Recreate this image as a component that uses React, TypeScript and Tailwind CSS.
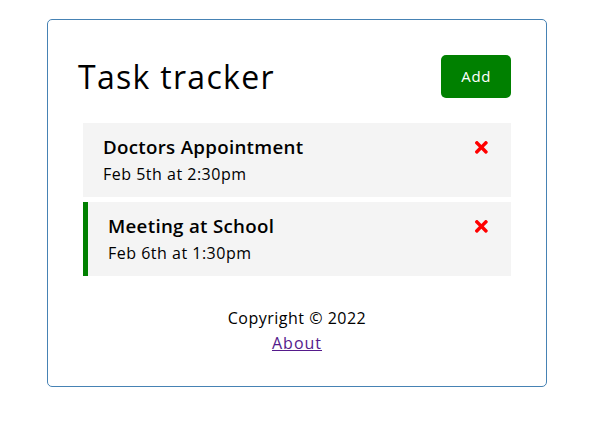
import React from "react";
import { FaTimes } from "react-icons/fa";

const tasks = [
  { id: 1, text: "Doctors Appointment", day: "Feb 5th at 2:30pm", reminder: false },
  { id: 2, text: "Meeting at School", day: "Feb 6th at 1:30pm", reminder: true },
];

export default function App() {
  return (
    <div className="min-h-[423px] bg-white pt-[19px] text-black" style={{ fontFamily: "'Open Sans', 'Noto Sans', sans-serif" }}>
      <div className="ml-[47px] w-[500px] rounded-[5px] border border-[steelblue] p-[30px]">
        <header className="mb-[20px] flex items-center justify-between">
          <h1 className="text-[32px] font-normal leading-[48px] tracking-[1.3px]">Task tracker</h1>
          <button className="m-[5px] h-[43px] rounded-[5px] bg-[green] px-[20px] text-[15px] font-medium tracking-[0.6px] text-white">Add</button>
        </header>
        <div className="flex flex-col gap-[5px] px-[5px]">
          {tasks.map((t) => (
            <div
              key={t.id}
              className={`h-[74px] bg-[#f4f4f4] py-[10px] pl-[20px] pr-[20px] ${t.reminder ? "border-l-[5px] border-[green]" : ""}`}
            >
              <h3 className="flex items-center justify-between text-[18.72px] font-semibold leading-[28px] tracking-[0.3px]">
                {t.text}
                <FaTimes className="text-[18.72px] text-[red]" />
              </h3>
              <p className="text-[16px] leading-[26px] tracking-[0.5px]">{t.day}</p>
            </div>
          ))}
        </div>
        <footer className="mt-[30px] text-center text-[16px] leading-[25px] tracking-[0.5px]">
          <p>Copyright © 2022</p>
          <a href="#" className="text-[#551a8b] underline tracking-[1px]">About</a>
        </footer>
      </div>
    </div>
  );
}
